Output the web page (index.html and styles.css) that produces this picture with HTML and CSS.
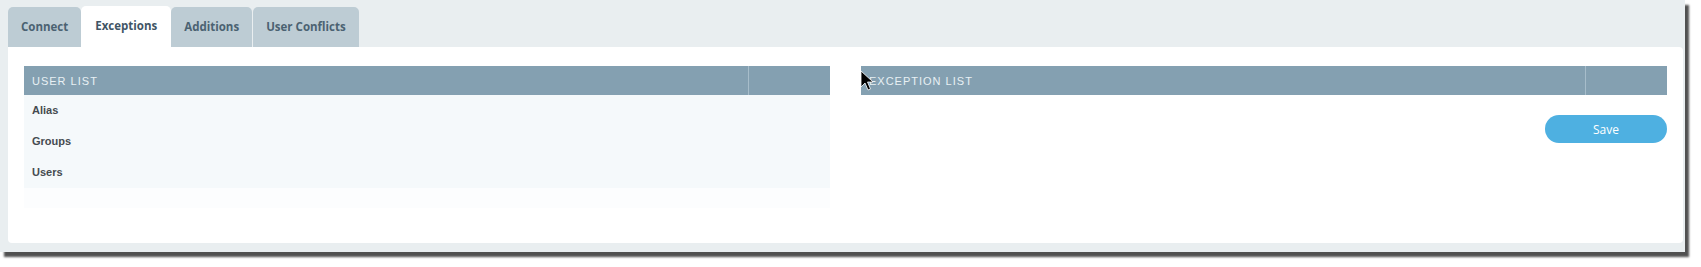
FILE: index.html
```html
<!DOCTYPE html>
<html lang="en">
<head>
	<meta charset="UTF-8">
	<title>Exceptions</title>
	<link rel="stylesheet" href="styles.css">
</head>
<body>
<div class="window">
	<ul class="tabs">
		<li class="tab">Connect</li>
		<li class="tab active">Exceptions</li>
		<li class="tab">Additions</li>
		<li class="tab">User Conflicts</li>
	</ul>

	<div class="panel">
		<div class="side">
			<table class="list">
				<thead>
					<tr><th>User List</th><th class="extra"></th></tr>
				</thead>
				<tbody>
					<tr><td>Alias</td><td></td></tr>
					<tr><td>Groups</td><td></td></tr>
					<tr><td>Users</td><td></td></tr>
					<tr class="filler"><td></td><td></td></tr>
				</tbody>
			</table>
		</div>

		<div class="side">
			<table class="list">
				<thead>
					<tr><th>Exception List</th><th class="extra"></th></tr>
				</thead>
			</table>
			<div class="actions">
				<button class="save" type="button">Save</button>
			</div>
		</div>
	</div>

	<!-- mouse pointer left in the capture -->
	<svg class="pointer" width="14" height="22" viewBox="0 0 14 22">
		<path d="M1 1 L1 17 L5 13 L8 20 L10.5 19 L7.5 12 L13 12 Z" fill="#000" stroke="#fff" stroke-width="0.8"/>
	</svg>
</div>
</body>
</html>
```

FILE: styles.css
```css
body{
	margin: 0;
	padding-bottom: 15px;
	background: #fff;
	font-family: "Liberation Sans", Arial, sans-serif;
}
.window{
	position: relative;
	width: 1685px;
	height: 252px;
	box-sizing: border-box;
	padding: 6px 2px 9px 8px;
	background: #e9eef0;
	box-shadow: 4px 5px 2px rgba(50, 50, 50, 0.85);
	display: flex;
	flex-direction: column;
}

.tabs{
	list-style: none;
	margin: 0;
	padding: 0;
	height: 41px;
	display: flex;
	align-items: flex-end;
}
.tab{
	height: 40px;
	box-sizing: border-box;
	padding: 0 13px 2px;
	display: flex;
	align-items: center;
	background: #bdccd4;
	color: #4b6272;
	font-family: "Open Sans", sans-serif;
	font-weight: 700;
	font-size: 11.5px;
	border-radius: 5px 5px 0 0;
}
.tab:nth-child(4){
	margin-left: 1px;
}
.tab.active{
	height: 41px;
	background: #fff;
	color: #3f5566;
	padding: 0 14px 3px;
}

.panel{
	flex: 1;
	background: #fff;
	border-radius: 0 4px 4px 4px;
	padding: 19px 16px 0;
	display: flex;
	gap: 31px;
}
.side{
	flex: 1;
}

.list{
	width: 100%;
	border-collapse: collapse;
}
.list th{
	height: 29px;
	padding: 0 0 0 8px;
	background: #84a0b1;
	color: #e8f0f4;
	font-weight: 400;
	font-size: 11px;
	letter-spacing: 1px;
	text-transform: uppercase;
	text-align: left;
}
.list th.extra{
	width: 73px;
	border-left: 1px solid #a7bdca;
}
.list td{
	height: 29px;
	padding: 0 0 2px 8px;
	background: #f5f9fb;
	color: #454b50;
	font-size: 11px;
	font-weight: 700;
}
.list .filler td{
	height: 20px;
	padding: 0;
	background: #fcfdfe;
}

.actions{
	display: flex;
	justify-content: flex-end;
	margin-top: 20px;
}
.save{
	width: 122px;
	height: 28px;
	border: 0;
	border-radius: 14px;
	background: #4eb0e1;
	color: #fff;
	font-family: "Open Sans", sans-serif;
	font-size: 12px;
}

.pointer{
	position: absolute;
	left: 860px;
	top: 70px;
}
```
